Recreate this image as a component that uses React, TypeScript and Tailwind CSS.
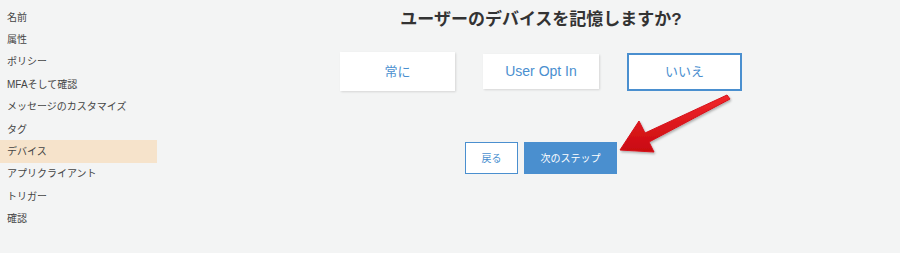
const navItems = [
  '名前',
  '属性',
  'ポリシー',
  'MFAそして確認',
  'メッセージのカスタマイズ',
  'タグ',
  'デバイス',
  'アプリクライアント',
  'トリガー',
  '確認',
]

const font = { fontFamily: '"Liberation Sans", "Noto Sans CJK JP", sans-serif' }

function Arrow() {
  return (
    <svg
      className="pointer-events-none absolute left-0 top-0"
      width="900"
      height="253"
      viewBox="0 0 900 253"
    >
      <defs>
        <linearGradient id="ar" x1="0" y1="0" x2="0" y2="1">
          <stop offset="0" stopColor="#f2262a" />
          <stop offset="1" stopColor="#c80a10" />
        </linearGradient>
        <filter id="sh" x="-10%" y="-10%" width="130%" height="130%">
          <feDropShadow dx="1" dy="1.5" stdDeviation="1.2" floodColor="#000" floodOpacity="0.3" />
        </filter>
      </defs>
      <polygon
        points="620,150 639,121 645,133 727,95 730,99 649,142 654,152"
        fill="url(#ar)"
        stroke="#d5121a"
        strokeWidth="1"
        strokeLinejoin="round"
        filter="url(#sh)"
      />
    </svg>
  )
}

export default function App() {
  return (
    <div className="relative h-[253px] w-[900px] overflow-hidden bg-[#f3f4f4]" style={font}>
      <div className="flex h-full">
        <aside className="w-[157px] shrink-0 pt-[6px]">
          {navItems.map((item) => (
            <div
              key={item}
              className={`flex h-[22.4px] items-center pl-[7px] text-[10px] text-[#444] ${
                item === 'デバイス' ? 'bg-[#f6e3cb]' : ''
              }`}
            >
              {item}
            </div>
          ))}
        </aside>

        <main className="ml-[25px] flex flex-1 flex-col items-center">
          <h1 className="mt-[8px] text-[17px] font-bold leading-[24px] text-[#333]">
            ユーザーのデバイスを記憶しますか?
          </h1>

          <div className="mt-[20px] flex items-center gap-[28px]">
            <button className="flex h-[39px] w-[115px] items-center justify-center bg-white text-[13px] text-[#4a8fcf] shadow-[1px_1px_2px_rgba(0,0,0,0.12)]">
              常に
            </button>
            <button className="flex h-[35px] w-[116px] items-center justify-center bg-white text-[14px] text-[#4a8fcf] shadow-[1px_1px_2px_rgba(0,0,0,0.12)]">
              User Opt In
            </button>
            <button className="flex h-[38px] w-[115px] items-center justify-center border-2 border-[#4a8fcf] bg-white text-[13px] text-[#4a8fcf]">
              いいえ
            </button>
          </div>

          <div className="mt-[51px] flex gap-[6px]">
            <button className="flex h-[32px] w-[53px] items-center justify-center border border-[#4a8fcf] bg-white text-[10px] text-[#4a8fcf]">
              戻る
            </button>
            <button className="flex h-[32px] w-[93px] items-center justify-center bg-[#4a8fcf] text-[10px] text-white">
              次のステップ
            </button>
          </div>
        </main>
      </div>
      <Arrow />
    </div>
  )
}
